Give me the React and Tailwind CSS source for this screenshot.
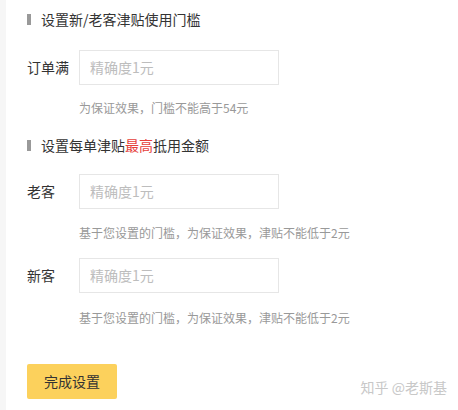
export default function App() {
  const font = { fontFamily: '"Noto Sans CJK SC", "Noto Sans", sans-serif' };
  const Input = () => (
    <div className="w-[200px] h-[35px] border border-[#e6e6e6] bg-white flex items-center px-[10px] text-[14px] text-[#bdbdbd]">
      精确度1元
    </div>
  );
  const Heading = ({ children }) => (
    <div className="flex items-center h-[20px]">
      <div className="w-[4px] h-[11px] bg-[#999] mr-[10px]" />
      <div className="text-[14px] leading-[20px] text-[#333]">{children}</div>
    </div>
  );
  const Row = ({ label, hint, gap }) => (
    <div>
      <div className="flex items-center">
        <div className="w-[52px] text-[14px] text-[#333]">{label}</div>
        <Input />
      </div>
      <div className={`ml-[52px] text-[12px] text-[#999] leading-[16px] ${gap}`}>{hint}</div>
    </div>
  );
  return (
    <div className="w-[458px] h-[410px] bg-white flex overflow-hidden" style={font}>
      <div className="w-[6px] bg-[#f6f6f6]" />
      <div className="relative flex-1 pl-[21px] pt-[9px]">
        <Heading>设置新/老客津贴使用门槛</Heading>
        <div className="mt-[21px]">
          <Row label="订单满" hint="为保证效果，门槛不能高于54元" gap="mt-[15px]" />
        </div>
        <div className="mt-[19px]">
          <Heading>
            设置每单津贴<span className="text-[#e5403a]">最高</span>抵用金额
          </Heading>
        </div>
        <div className="mt-[19px]">
          <Row label="老客" hint="基于您设置的门槛，为保证效果，津贴不能低于2元" gap="mt-[16px]" />
        </div>
        <div className="mt-[17px]">
          <Row label="新客" hint="基于您设置的门槛，为保证效果，津贴不能低于2元" gap="mt-[17px]" />
        </div>
        <button className="mt-[38px] w-[90px] h-[35px] bg-[#fcd15c] rounded-[2px] text-[14px] text-[#333]">
          完成设置
        </button>
        <div className="absolute right-[11px] bottom-[13px] text-[14px] leading-[20px] text-[#c8c8c8]">知乎 @老斯基</div>
      </div>
    </div>
  );
}
